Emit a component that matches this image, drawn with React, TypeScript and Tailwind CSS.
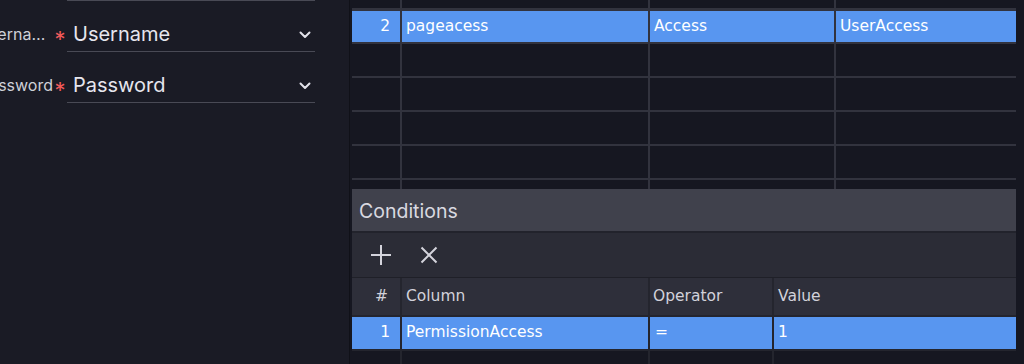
import React from "react";

const grid = "grid grid-cols-[48px_246px_184px_180px] gap-[2px]";
const cond = "grid grid-cols-[48px_246px_122px_242px] gap-[2px]";
const mono = { fontFamily: '"DejaVu Sans", Verdana, sans-serif' };

function Chevron() {
  return (
    <svg width="12" height="8" viewBox="0 0 12 8" fill="none">
      <path d="M1.5 1.5 6 6l4.5-4.5" stroke="#e2e2ea" strokeWidth="2" strokeLinecap="round" strokeLinejoin="round" />
    </svg>
  );
}

function Field({ label, value }: { label: string; value: string }) {
  return (
    <div className="flex h-[51px] items-end">
      <div className="w-[76px] shrink-0 truncate pb-[6px] text-right text-[16px] leading-6 text-[#cfd0d8]">
        {label}
      </div>
      <span className="w-[14px] shrink-0 pb-[1px] text-center text-[22px] leading-6 text-[#f25a5a]">*</span>
      <div className="flex h-full w-[248px] items-end border-b border-[#494a55] pb-[3px] pl-[6px] pr-[4px]">
        <span className="flex-1 text-[20px] leading-7 text-[#e6e6ee]">{value}</span>
        <span className="mb-[9px]">
          <Chevron />
        </span>
      </div>
    </div>
  );
}

function EmptyRow({ h, cols }: { h: string; cols: string }) {
  return (
    <div className={`${cols} ${h}`}>
      <div className="bg-[#161721]" />
      <div className="bg-[#161721]" />
      <div className="bg-[#161721]" />
      <div className="bg-[#161721]" />
    </div>
  );
}

export default function App() {
  return (
    <div className="flex h-[364px] w-[1024px] overflow-hidden bg-[#161721]" style={{ fontFamily: "Inter, sans-serif" }}>
      {/* Form panel */}
      <div className="w-[350px] shrink-0 overflow-hidden border-r border-[#101118] bg-[#1a1b25]">
        <div className="ml-[-23px]">
          <div className="ml-[90px] w-[248px] border-b border-[#494a55]" />
          <Field label="Username" value="Username" />
          <Field label="Password" value="Password" />
        </div>
      </div>

      {/* Query panel */}
      <div className="flex-1 pl-[2px]" style={mono}>
        <div className="w-[666px] pr-[2px]">
          <div className="flex h-[189px] flex-col gap-[2px] overflow-hidden bg-[#32333e]">
            <EmptyRow h="h-[8px] shrink-0" cols={grid} />
            <div className={`${grid} h-[32px] shrink-0 pt-px text-[15.5px] text-white`}>
              <div className="flex items-center justify-end bg-[#5896f0] pr-[10px]">2</div>
              <div className="flex items-center bg-[#5896f0] pl-[4px]">pageacess</div>
              <div className="flex items-center bg-[#5896f0] pl-[4px]">Access</div>
              <div className="flex items-center bg-[#5896f0] pl-[4px]">UserAccess</div>
            </div>
            <EmptyRow h="h-[32px] shrink-0" cols={grid} />
            <EmptyRow h="h-[32px] shrink-0" cols={grid} />
            <EmptyRow h="h-[32px] shrink-0" cols={grid} />
            <EmptyRow h="h-[32px] shrink-0" cols={grid} />
            <EmptyRow h="h-[32px] shrink-0" cols={grid} />
          </div>

          {/* Conditions */}
          <div className="flex h-[44px] items-center border-b-2 border-[#22232c] bg-[#40414c] pl-[7px] pt-[3px] text-[19.5px] text-[#d9d9e0]" style={{ fontFamily: "Inter, sans-serif" }}>
            Conditions
          </div>
          <div className="flex h-[45px] items-center gap-[28px] border-b border-[#1f2028] bg-[#2b2c36] pl-[18px]">
            <svg width="22" height="22" viewBox="0 0 22 22" fill="none">
              <path d="M11 1v20M1 11h20" stroke="#d4d4dc" strokeWidth="2" />
            </svg>
            <svg width="18" height="18" viewBox="0 0 18 18" fill="none">
              <path d="M1.5 1.5l15 15M16.5 1.5l-15 15" stroke="#d4d4dc" strokeWidth="2" />
            </svg>
          </div>
          <div className="flex flex-col gap-[2px] bg-[#24252e]">
            <div className={`${cond} h-[37px] text-[15.5px] text-[#d2d2da]`}>
              <div className="flex items-center justify-end bg-[#2e2f3a] pr-[12px]">#</div>
              <div className="flex items-center bg-[#2e2f3a] pl-[4px]">Column</div>
              <div className="flex items-center bg-[#2e2f3a] pl-[3px]">Operator</div>
              <div className="flex items-center bg-[#2e2f3a] pl-[4px]">Value</div>
            </div>
            <div className={`${cond} h-[32px] text-[15.5px] text-white`}>
              <div className="flex items-center justify-end bg-[#5896f0] pr-[10px]">1</div>
              <div className="flex items-center bg-[#5896f0] pl-[4px]">PermissionAccess</div>
              <div className="flex items-center bg-[#5896f0] pl-[5px]">=</div>
              <div className="flex items-center bg-[#5896f0] pl-[4px]">1</div>
            </div>
            <EmptyRow h="h-[32px]" cols={cond} />
          </div>
        </div>
      </div>
    </div>
  );
}
